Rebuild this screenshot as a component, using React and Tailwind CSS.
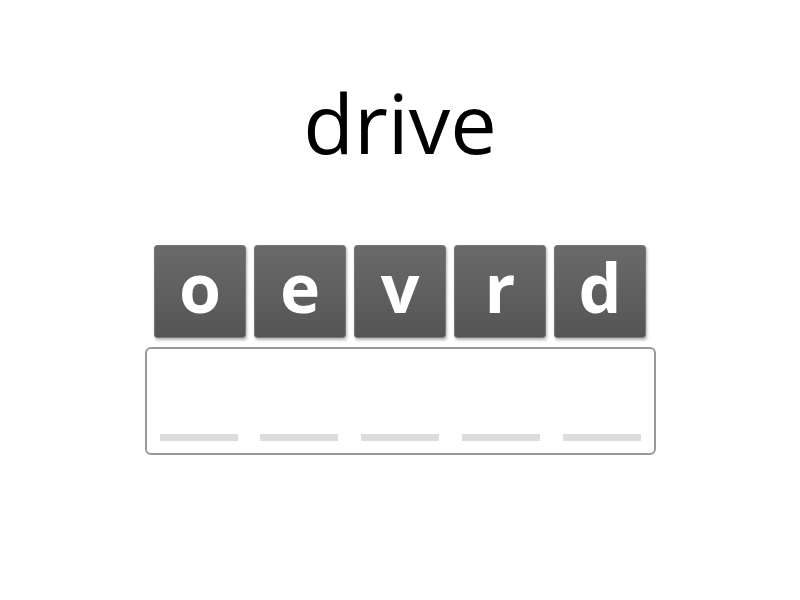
const letters = ["o", "e", "v", "r", "d"];

function Tile({ letter }) {
    return (
        <div className="w-[92px] h-[93px] rounded-[3px] border border-[#777] bg-gradient-to-b from-[#6a6a6a] to-[#555] shadow-[1px_2px_3px_rgba(0,0,0,0.3)] flex items-center justify-center">
            <span className="text-white font-bold text-[68px] leading-none -mt-[9px]">{letter}</span>
        </div>
    );
}

export default function App() {
    return (
        <div className="w-[800px] h-[600px] bg-white flex flex-col items-center font-['Open_Sans','Noto_Sans',sans-serif]">
            <h1 className="mt-[74px] text-[83px] leading-[96px] text-black">drive</h1>

            <div className="mt-[75px] flex gap-[8px]">
                {letters.map((l, i) => (
                    <Tile key={i} letter={l} />
                ))}
            </div>

            <div className="mt-[9px] w-[511px] h-[108px] border-2 border-[#999] rounded-[6px] flex items-end justify-between px-[13px] pb-[12px]">
                {letters.map((_, i) => (
                    <div key={i} className="w-[78px] h-[7px] bg-[#dddddd]" />
                ))}
            </div>
        </div>
    );
}
